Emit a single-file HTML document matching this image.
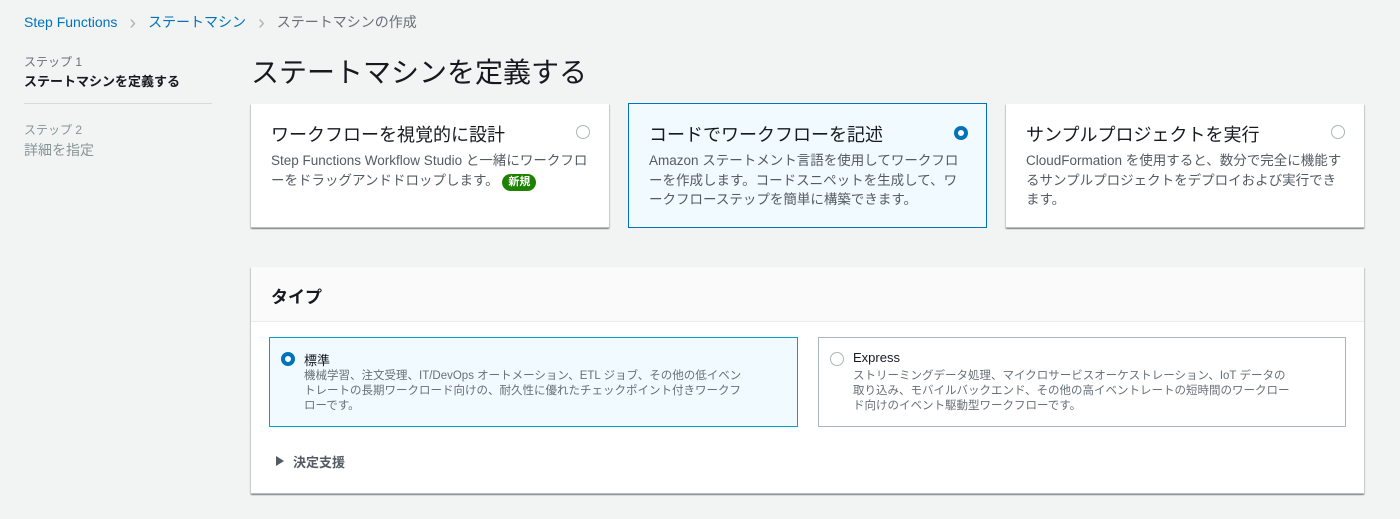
<!DOCTYPE html>
<html><head><meta charset="utf-8"><style>
*{box-sizing:border-box;margin:0;padding:0}
body{width:1400px;height:519px;background:#f2f3f3;font-family:"Liberation Sans","Noto Sans CJK JP",sans-serif;position:relative;overflow:hidden;color:#16191f}
.a{position:absolute;white-space:nowrap}
.card{position:absolute;background:#fff;box-shadow:0 1px 1px 0 rgba(0,28,36,.3),1px 1px 1px 0 rgba(0,28,36,.15),-1px 1px 1px 0 rgba(0,28,36,.15);border-bottom:1px solid #bbb}
.ct{position:absolute;left:20px;top:17px;font-size:18px;color:#16191f}
.cd{position:absolute;left:20px;top:47px;font-size:13.5px;line-height:19.5px;color:#545b64;width:318px}
.rad{position:absolute;width:14px;height:14px;border-radius:50%;border:1px solid #aab7b8;background:#fff}
.rad.on{border:4px solid #0073bb}
.opt{position:absolute;top:70px;height:90px;border:1px solid #aab7b8;background:#fff}
.opt .rad{left:11px;top:14px}
.ot{position:absolute;left:34px;top:12px;font-size:13px;color:#16191f}
.od{position:absolute;left:34px;top:31px;font-size:11.5px;line-height:15px;color:#687078;width:440px}
.ch{color:#aab7b8;margin:0 12px;font-size:20px;vertical-align:-2px}
</style></head><body>
<div class="a" style="left:24px;top:12px;font-size:14px;color:#0073bb">Step Functions<span class="ch">›</span>ステートマシン<span class="ch">›</span><span style="color:#687078">ステートマシンの作成</span></div>
<div class="a" style="left:24px;top:53px;font-size:12px;color:#687078">ステップ 1</div>
<div class="a" style="left:24px;top:71px;font-size:13px;font-weight:bold">ステートマシンを定義する</div>
<div class="a" style="left:24px;top:103px;width:188px;height:1px;background:#d5dbdb"></div>
<div class="a" style="left:24px;top:121px;font-size:12px;color:#879596">ステップ 2</div>
<div class="a" style="left:24px;top:140px;font-size:14px;color:#879596">詳細を指定</div>
<div class="a" style="left:251px;top:51px;font-size:28px;color:#16191f">ステートマシンを定義する</div>

<div class="card" style="left:251px;top:104px;width:358px;height:124px">
<div class="ct">ワークフローを視覚的に設計</div><div class="rad" style="left:325px;top:21px"></div>
<div class="cd">Step Functions Workflow Studio と一緒にワークフローをドラッグアンドドロップします。 <span style="display:inline-block;background:#1d8102;color:#fff;font-size:11px;font-weight:bold;border-radius:9px;padding:0 6px;line-height:17px">新規</span></div></div>
<div class="card" style="left:628px;top:103px;width:359px;height:125px;background:#f1faff;border:1px solid #0073bb;box-shadow:none">
<div class="ct">コードでワークフローを記述</div><div class="rad on" style="left:325px;top:22px"></div>
<div class="cd">Amazon ステートメント言語を使用してワークフローを作成します。コードスニペットを生成して、ワークフローステップを簡単に構築できます。</div></div>
<div class="card" style="left:1006px;top:104px;width:358px;height:124px">
<div class="ct">サンプルプロジェクトを実行</div><div class="rad" style="left:325px;top:21px"></div>
<div class="cd">CloudFormation を使用すると、数分で完全に機能するサンプルプロジェクトをデプロイおよび実行できます。</div></div>

<div class="card" style="left:251px;top:267px;width:1113px;height:227px">
<div style="position:absolute;left:0;top:0;width:100%;height:55px;background:#fafafa;border-bottom:1px solid #eaeded"></div>
<div class="a" style="left:20px;top:16px;font-size:17px;font-weight:bold">タイプ</div>
<div class="opt" style="left:18px;width:529px;background:#f1faff;border-color:#00a1c9"><div class="rad on"></div><div class="ot">標準</div><div class="od">機械学習、注文受理、IT/DevOps オートメーション、ETL ジョブ、その他の低イベントレートの長期ワークロード向けの、耐久性に優れたチェックポイント付きワークフローです。</div></div>
<div class="opt" style="left:567px;width:528px"><div class="rad"></div><div class="ot">Express</div><div class="od">ストリーミングデータ処理、マイクロサービスオーケストレーション、IoT データの取り込み、モバイルバックエンド、その他の高イベントレートの短時間のワークロード向けのイベント駆動型ワークフローです。</div></div>
<div class="a" style="left:25px;top:189px;width:0;height:0;border-left:8px solid #545b64;border-top:5px solid transparent;border-bottom:5px solid transparent"></div>
<div class="a" style="left:42px;top:185px;font-size:13px;font-weight:bold;color:#545b64">決定支援</div>
</div>
</body></html>
